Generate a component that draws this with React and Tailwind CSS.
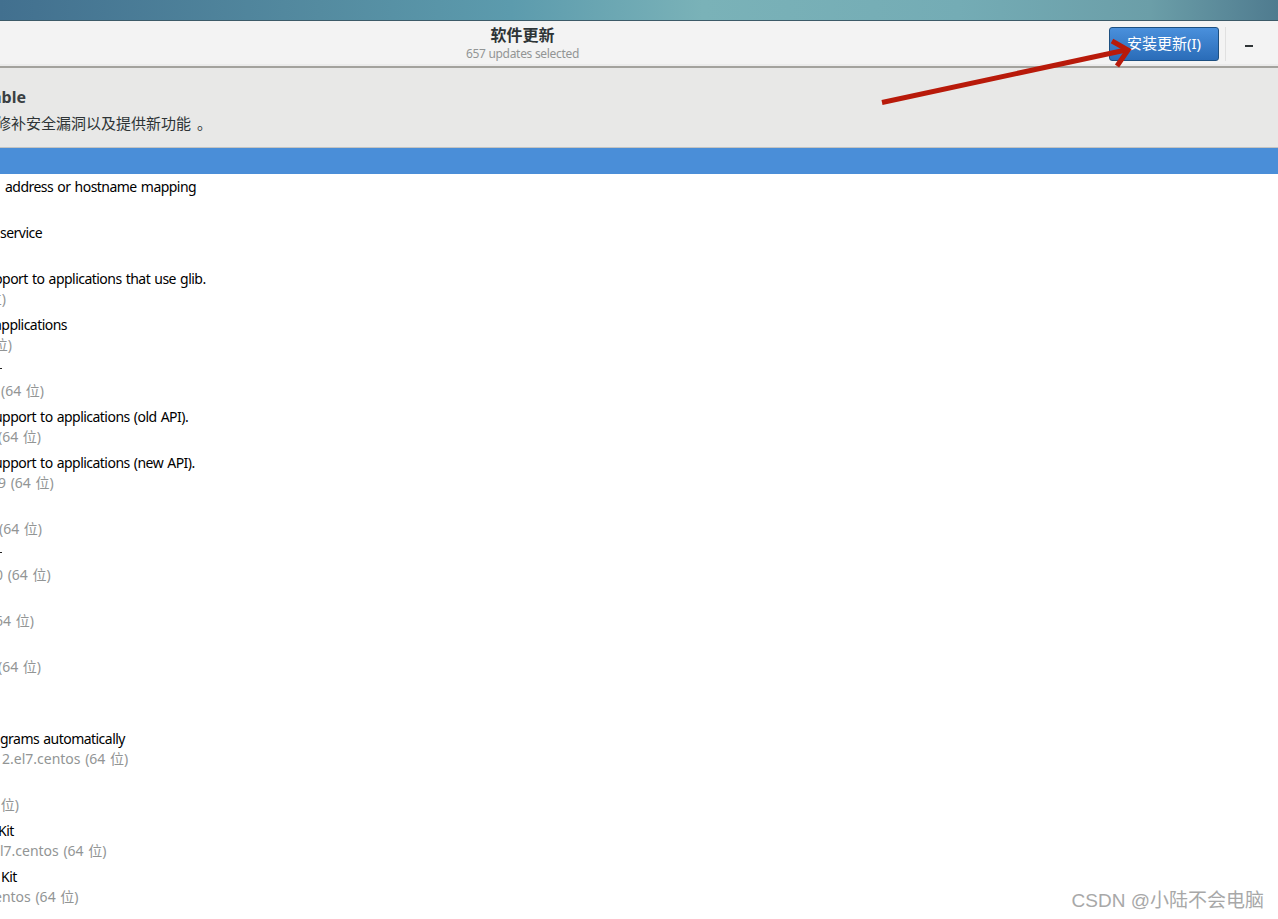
const FONT = '[font-family:"Noto_Sans","Noto_Sans_CJK_SC",sans-serif]';

// the window is pushed off the left edge of the screen, so most lines start clipped
const ROWS = [
  { title: 'address or hostname mapping', titleX: 'ml-[5px]' },
  { title: 'service', titleX: 'ml-0' },
  { title: 'pport to applications that use glib.', titleX: 'ml-[-6px]', sub: '64 位)', subX: 'ml-[-33px]' },
  { title: 'applications', titleX: 'ml-[-6px]', sub: '64 位)', subX: 'ml-[-27px]' },
  { mark: true, sub: '(64 位)', subX: 'ml-[1px]' },
  { title: 'upport to applications (old API).', titleX: 'ml-[-6px]', sub: '(64 位)', subX: 'ml-[-2px]' },
  { title: 'upport to applications (new API).', titleX: 'ml-[-6px]', sub: '9 (64 位)', subX: 'ml-[-2px]' },
  { title: '', sub: '(64 位)', subX: 'ml-[-1px]' },
  { mark: true, sub: '0 (64 位)', subX: 'ml-[-5px]' },
  { title: '', sub: '64 位)', subX: 'ml-[-5px]' },
  { title: '', sub: '(64 位)', subX: 'ml-[-2px]' },
  { title: '' },
  { title: 'grams automatically', titleX: 'ml-0', sub: '2.el7.centos (64 位)', subX: 'ml-[2px]' },
  { title: '', sub: '64 位)', subX: 'ml-[-20px]' },
  { title: 'Kit', titleX: 'ml-[-2px]', sub: 'el7.centos (64 位)', subX: 'ml-[-8px]' },
  { title: 'Kit', titleX: 'ml-[1px]', sub: 'entos (64 位)', subX: 'ml-[-6px]' },
];

function Row({ row }) {
  return (
    <div className="h-[46px] pt-[3px] overflow-hidden whitespace-nowrap">
      {row.mark ? (
        <div className="h-5 pt-[7px]">
          <div className="h-px w-[2px] bg-[#222]" />
        </div>
      ) : (
        <div className={`h-5 leading-5 text-[14px] tracking-[-0.53px] [word-spacing:1px] text-black ${row.titleX || ''}`}>{row.title}</div>
      )}
      {row.sub && (
        <div className={`h-5 leading-5 text-[14px] [word-spacing:1px] text-[#929595] ${row.subX}`}>{row.sub}</div>
      )}
    </div>
  );
}

export default function App() {
  return (
    <div className={`relative h-[919px] w-[1278px] overflow-hidden bg-white ${FONT}`}>
      <div className="h-[21px] border-b border-[#3c5a68] bg-[linear-gradient(90deg,#42708f_0%,#548ba0_25%,#5c9bad_40%,#7ab2b8_55%,#74acb5_75%,#6b9ea8_90%,#4f7b8f_100%)]" />

      <header className="flex h-[47px] items-center border-b-2 border-[#a3a29d] bg-[#f3f3f3] shadow-[inset_0_-2px_0_#ebebeb]">
        <div className="w-[1045px] text-center">
          <div className="mt-[-1px] text-[16px] font-bold leading-5 text-[#2e3436]">软件更新</div>
          <div className="mt-[1px] text-[12px] leading-4 tracking-[-0.3px] text-[#929595]">657 updates selected</div>
        </div>
        <button className="ml-[64px] h-[34px] w-[110px] rounded-[3px] border border-[#1d4f80] bg-[linear-gradient(180deg,#4a90dc,#2a6cb8)] text-[15px] text-white">
          安装更新(I)
        </button>
        <div className="ml-[6px] h-[34px] w-px bg-[#e0e0e0]" />
        <div className="ml-[19px] mt-[5px] h-[2px] w-2 bg-[#2e3436]" />
      </header>

      <section className="h-[80px] border-b border-[#c4c4c2] bg-[#e8e8e7] pt-[18px] whitespace-nowrap">
        <div className="ml-[-8px] text-[16px] font-bold leading-[22px] text-[#3a3f42]">able</div>
        <div className="ml-[-4px] mt-[5px] text-[15px] leading-5 text-[#2e3436]">
          修补安全漏洞以及提供新功能<span className="ml-[6px]">。</span>
        </div>
      </section>

      <div className="h-[26px] bg-[#4a8ed8]" />

      <div>
        {ROWS.map((row, i) => (
          <Row key={i} row={row} />
        ))}
      </div>

      <svg className="absolute left-0 top-0 pointer-events-none" width="1278" height="120" viewBox="0 0 1278 120" fill="none" stroke="#b81a0a" strokeWidth="5">
        <path d="M882 102.5L1126 50" />
        <path d="M1112 41L1128 50L1117 66" />
      </svg>

      <div className='absolute right-[14px] top-[889px] text-[19px] leading-6 text-[#a8a8a8] [font-family:"Liberation_Sans","Noto_Sans_CJK_SC",sans-serif]'>
        CSDN @小陆不会电脑
      </div>
    </div>
  );
}
